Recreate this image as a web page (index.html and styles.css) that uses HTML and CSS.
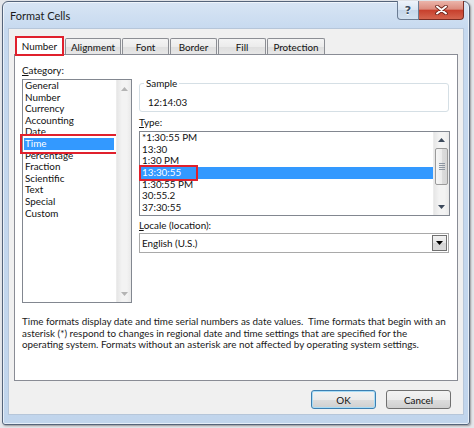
FILE: index.html
```html
<!DOCTYPE html>
<html>
<head>
<meta charset="utf-8">
<title>Format Cells</title>
<link rel="stylesheet" href="styles.css">
</head>
<body>
<div class="screen">
  <div class="window">
    <div class="titlebar">
      <span class="title">Format Cells</span>
      <div class="caption">
        <div class="cbtn help">?</div>
        <div class="cbtn close">
          <svg width="13" height="10" viewBox="0 0 13 10"><path d="M2 1.5 L11 8.5 M11 1.5 L2 8.5" stroke="#6b241b" stroke-width="3.6" stroke-linecap="round"/><path d="M2 1.5 L11 8.5 M11 1.5 L2 8.5" stroke="#ffffff" stroke-width="2" stroke-linecap="round"/></svg>
        </div>
      </div>
    </div>
    <div class="client">
      <div class="tabs">
        <div class="tab sel w-number">Number</div>
        <div class="tab w-align">Alignment</div>
        <div class="tab w-font">Font</div>
        <div class="tab w-border">Border</div>
        <div class="tab w-fill">Fill</div>
        <div class="tab w-prot">Protection</div>
      </div>
      <div class="panel">
        <div class="cols">
          <div class="leftcol">
            <div class="label"><u>C</u>ategory:</div>
            <div class="listbox cat">
              <div class="items">
                <div class="item">General</div>
                <div class="item">Number</div>
                <div class="item">Currency</div>
                <div class="item">Accounting</div>
                <div class="item">Date</div>
                <div class="item sel">Time</div>
                <div class="item">Percentage</div>
                <div class="item">Fraction</div>
                <div class="item">Scientific</div>
                <div class="item">Text</div>
                <div class="item">Special</div>
                <div class="item">Custom</div>
              </div>
              <div class="vscroll off">
                <svg class="arr" width="7" height="4" viewBox="0 0 7 4"><path d="M0 4 L3.5 0 L7 4Z" fill="#b4b4b4"/></svg>
                <svg class="arr" width="7" height="4" viewBox="0 0 7 4"><path d="M0 0 L3.5 4 L7 0Z" fill="#b4b4b4"/></svg>
              </div>
            </div>
          </div>
          <div class="rightcol">
            <fieldset class="sample">
              <legend>Sample</legend>
              <div class="sample-val">12:14:03</div>
            </fieldset>
            <div class="label type-label"><u>T</u>ype:</div>
            <div class="listbox typelist">
              <div class="items">
                <div class="item">*1:30:55 PM</div>
                <div class="item">13:30</div>
                <div class="item">1:30 PM</div>
                <div class="item hl"><span class="mark">13:30:55</span></div>
                <div class="item">1:30:55 PM</div>
                <div class="item">30:55.2</div>
                <div class="item">37:30:55</div>
              </div>
              <div class="vscroll on">
                <div class="sbtn"><svg width="7" height="4" viewBox="0 0 7 4"><path d="M0 4 L3.5 0 L7 4Z" fill="#3d4a5c"/></svg></div>
                <div class="thumb"><svg width="6" height="7" viewBox="0 0 6 7"><path d="M0 0.5 H6 M0 2.5 H6 M0 4.5 H6 M0 6.5 H6" stroke="#8d96a1" stroke-width="1"/></svg></div>
                <div class="track"></div>
                <div class="sbtn"><svg width="7" height="4" viewBox="0 0 7 4"><path d="M0 0 L3.5 4 L7 0Z" fill="#3d4a5c"/></svg></div>
              </div>
            </div>
            <div class="label locale-label"><u>L</u>ocale (location):</div>
            <div class="combo">
              <span class="combo-text">English (U.S.)</span>
              <div class="combo-btn"><svg width="7" height="4" viewBox="0 0 7 4"><path d="M0 0 L3.5 4 L7 0Z" fill="#000"/></svg></div>
            </div>
          </div>
        </div>
        <p class="desc">Time formats display date and time serial numbers as date values.&nbsp; Time formats that begin with an<br>asterisk (*) respond to changes in regional date and time settings that are specified for the<br>operating system. Formats without an asterisk are not affected by operating system settings.</p>
      </div>
      <div class="buttons">
        <button class="btn default">OK</button>
        <button class="btn">Cancel</button>
      </div>
    </div>
  </div>
</div>
</body>
</html>
```

FILE: styles.css
```css
* { box-sizing: border-box; }
html, body { margin: 0; padding: 0; }
body {
  width: 474px;
  height: 428px;
  overflow: hidden;
  background: #e4e6ea;
  font-family: Lato, "Noto Sans", sans-serif;
  font-size: 9.85px;
  color: #111;
}
.screen { padding: 1px 0 0 2px; }
.window {
  width: 468px;
  height: 424px;
  border: 1px solid #55647a;
  border-radius: 6px 6px 3px 3px;
  background: linear-gradient(#d8e5f4, #c6d9ef 28px, #c1d5ec);
  padding: 0 5px 9px 5px;
  display: flex;
  flex-direction: column;
  box-shadow: inset 0 0 0 1px rgba(255,255,255,.6), 1px 1px 2px rgba(0,0,0,.35);
}
.titlebar {
  height: 26px;
  display: flex;
  justify-content: space-between;
  align-items: flex-start;
}
.title {
  font-size: 11px;
  line-height: 13px;
  padding: 7px 0 0 2px;
  color: #1b1b1b;
}
.caption { display: flex; margin-top: -1px; }
.cbtn {
  height: 19px;
  display: flex;
  align-items: center;
  justify-content: center;
}
.help {
  width: 22px;
  border: 1px solid #6b7c93;
  border-top: none;
  border-radius: 0 0 0 4px;
  background: linear-gradient(#eef3fa, #d9e5f2 48%, #c5d6ea 52%, #d2e1f1);
  font-family: "DejaVu Sans", sans-serif;
  font-size: 11px;
  font-weight: bold;
  color: #3a4a5e;
  text-shadow: 0 1px 0 #fff;
}
.close {
  width: 45px;
  border: 1px solid #7b2c22;
  border-left: none;
  border-top: none;
  border-radius: 0 0 4px 0;
  background: linear-gradient(#ebb4aa, #dc8b7d 45%, #c7402d 52%, #d4654f);
}
.client {
  flex: 1;
  background: #f0f0f0;
  border: 1px solid #b6c6d9;
  padding: 7px 5px 0 5px;
}
.tabs {
  display: flex;
  align-items: flex-end;
  height: 18px;
  position: relative;
  z-index: 1;
}
.tab {
  height: 16px;
  margin-left: 1px;
  border: 1px solid #8c8e94;
  border-bottom: none;
  border-radius: 2px 2px 0 0;
  background: linear-gradient(#f4f4f4, #ececec 50%, #dedede 52%, #e7e7e7);
  display: flex;
  align-items: center;
  justify-content: center;
}
.tab.sel {
  height: 20px;
  margin-bottom: -2px;
  border: 2px solid #e0202c;
  border-radius: 0;
  background: #fff;
}
.w-number { width: 49px; }
.w-align { width: 56px; }
.w-font { width: 47px; }
.w-border { width: 47px; }
.w-fill { width: 48px; }
.w-prot { width: 58px; }
.panel {
  height: 327px;
  border: 1px solid #898c95;
  background: #fff;
  padding: 9px 7px 0 7px;
}
.cols { display: flex; gap: 7px; }
.leftcol { width: 110px; }
.rightcol { width: 311px; }
.label { height: 12px; line-height: 12px; }
.leftcol .label { margin-bottom: 3px; }
.listbox {
  border: 1px solid #828790;
  background: #fff;
  display: flex;
}
.cat { height: 224px; }
.items { flex: 1; }
.item {
  height: 11.6px;
  line-height: 11.6px;
  padding-left: 2px;
  white-space: nowrap;
}
.cat .item.sel {
  background: #3399ff;
  color: #fff;
  margin: 0 2px 0 1px;
  padding-left: 1px;
  outline: 2px solid #e0202c;
  outline-offset: 2px;
}
.vscroll {
  width: 15px;
  background: linear-gradient(to right, #e6e6e6, #f3f3f3 35%, #f3f3f3 70%, #e9e9e9);
  border-left: 1px solid #ececec;
  display: flex;
  flex-direction: column;
  align-items: center;
}
.vscroll.off {
  justify-content: space-between;
  padding: 7px 0 6px 0;
}
.sample {
  margin: 13px 0 0 0;
  padding: 0 0 3px 0;
  border: 1px solid #d5dfe5;
  border-radius: 3px;
  width: 310px;
}
.sample legend {
  padding: 0 2px;
  margin-left: 4px;
  line-height: 12px;
}
.sample-val {
  padding: 7px 0 0 8px;
  line-height: 12px;
  height: 19px;
}
.type-label { margin-top: 4px; margin-bottom: 3px; }
.typelist { height: 85px; }
.typelist .items { padding-top: 0.2px; }
.typelist .item.hl {
  background: #3399ff;
  color: #fff;
  margin-left: 1px;
  padding-left: 1px;
}
.mark {
  display: block;
  width: 55px;
  height: 11.6px;
  margin-left: -1px;
  padding-left: 1px;
  outline: 2px solid #e0202c;
  outline-offset: 0;
}
.vscroll.on { width: 16px; }
.sbtn {
  height: 16px;
  width: 100%;
  display: flex;
  align-items: center;
  justify-content: center;
}
.thumb {
  width: 13px;
  height: 37px;
  border: 1px solid #9a9a9a;
  border-radius: 2px;
  background: linear-gradient(to right, #f6f6f6, #ececec 50%, #dcdcdc 52%, #d6d6d6);
  display: flex;
  align-items: center;
  justify-content: center;
}
.track { flex: 1; }
.locale-label { margin-top: 3px; margin-bottom: 2px; }
.combo {
  height: 20px;
  width: 310px;
  border: 1px solid #a9a9a9;
  background: #fff;
  display: flex;
  align-items: center;
  padding-left: 2px;
}
.combo-btn {
  margin-left: auto;
  margin-right: 1px;
  width: 15px;
  height: 16px;
  border: 1px solid #707070;
  background: linear-gradient(#f2f2f2, #e6e6e6 50%, #d6d6d6 52%, #dadada);
  display: flex;
  align-items: center;
  justify-content: center;
}
.desc {
  margin: 13px 0 0 0;
  line-height: 11.5px;
  white-space: nowrap;
  color: #1a1a1a;
}
.buttons {
  display: flex;
  justify-content: flex-end;
  gap: 10px;
  margin-top: 9px;
  padding-right: 7px;
}
.btn {
  width: 65px;
  height: 19px;
  border: 1px solid #707070;
  border-radius: 3px;
  background: linear-gradient(#f2f2f2, #ebebeb 50%, #dddddd 52%, #cfcfcf);
  font: inherit;
  color: #111;
  padding: 0;
}
.btn.default {
  border-color: #3c7fb1;
  box-shadow: inset 0 0 0 1px #a8dcf6;
}
```
